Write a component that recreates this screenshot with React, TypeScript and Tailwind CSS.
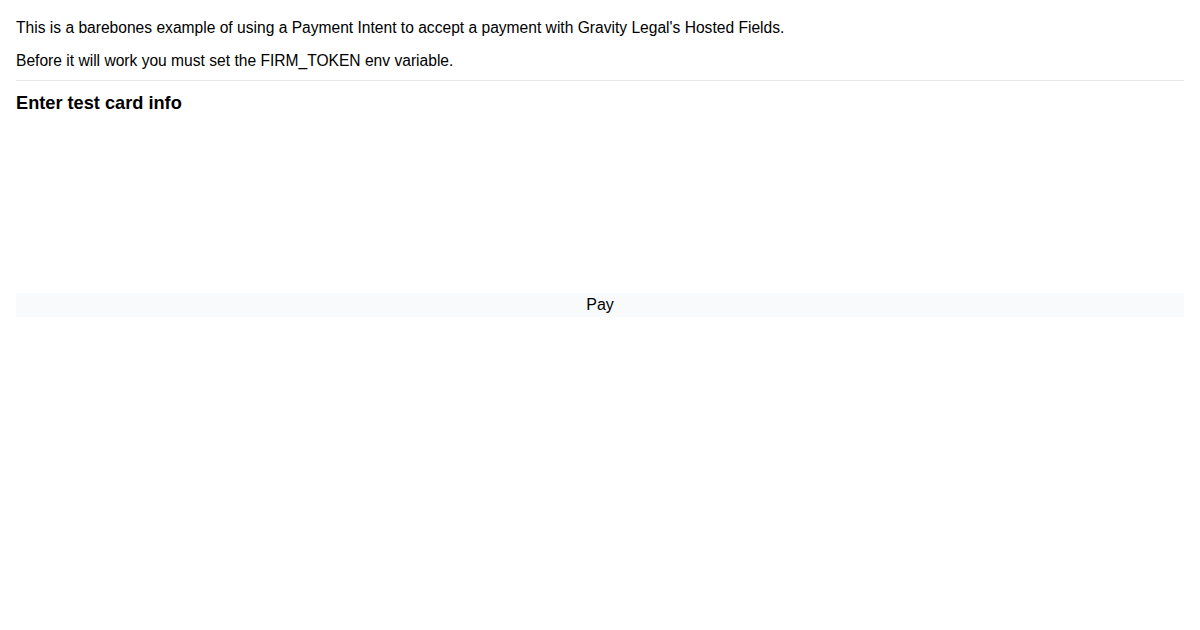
export default function App() {
  return (
    <div className="min-h-screen bg-white px-4 pt-4 text-black font-['Liberation_Sans',Arial,sans-serif]">
      <p className="text-[15.6px] leading-6">
        This is a barebones example of using a Payment Intent to accept a payment with Gravity Legal's Hosted Fields.
      </p>
      <p className="mt-[9px] text-[15.6px] leading-6">
        Before it will work you must set the FIRM_TOKEN env variable.
      </p>
      <hr className="mt-[7px] border-t border-gray-200" />
      <h3 className="mt-2 text-[18.2px] font-bold leading-7">Enter test card info</h3>
      <div className="h-[176px]" />
      <button className="block h-6 w-full bg-gray-50 text-base leading-6">Pay</button>
    </div>
  );
}
